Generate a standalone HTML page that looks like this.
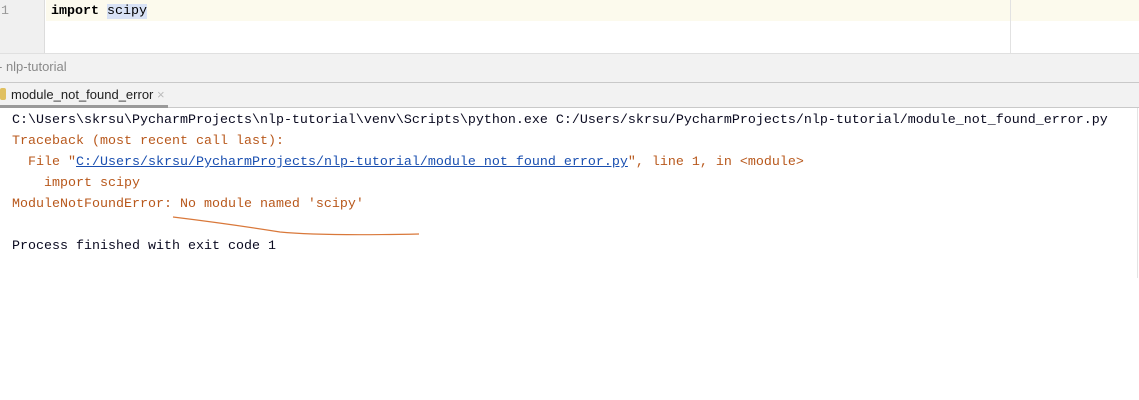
<!DOCTYPE html>
<html><head><meta charset="utf-8"><style>
*{margin:0;padding:0;box-sizing:border-box}
body{width:1139px;height:400px;background:#fff;position:relative;overflow:hidden;font-family:"Liberation Mono",monospace;font-size:13.33px}
.abs{position:absolute;white-space:pre}
.mono{font-family:"Liberation Mono",monospace;font-size:13.33px;line-height:21px}
</style></head><body>
<div class="abs" style="left:0;top:0;width:45px;height:53px;background:#f0f0f0;border-right:1px solid #dcdcdc"></div>
<div class="abs" style="left:46px;top:0;width:1093px;height:21px;background:#fcfaed"></div>
<div class="abs" style="left:1010px;top:0;width:1px;height:53px;background:#e2e2e2"></div>
<div class="abs mono" style="left:1px;top:1px;color:#999">1</div>
<div class="abs mono" style="left:51px;top:1px;color:#000"><b style="color:#000">import</b> <span style="background:#d8e2f5;color:#000">scipy</span></div>
<div class="abs" style="left:0;top:53px;width:1139px;height:30px;background:#f2f2f2;border-top:1px solid #e0e0e0;border-bottom:1px solid #c9c9c9"></div>
<div class="abs" style="left:-2px;top:59px;font-family:'Liberation Sans',sans-serif;font-size:13px;color:#8a8a8a">- nlp-tutorial</div>
<div class="abs" style="left:0;top:83px;width:1139px;height:25px;background:#f2f2f2;border-bottom:1px solid #c9c9c9"></div>
<div class="abs" style="left:0;top:88px;width:6px;height:12px;background:#e0c060;border-radius:2px"></div>
<div class="abs" style="left:11px;top:87px;font-family:'Liberation Sans',sans-serif;font-size:13px;color:#222">module_not_found_error <span style="color:#bbb">×</span></div>
<div class="abs" style="left:0;top:105px;width:168px;height:3px;background:#9a9a9a"></div>
<div class="abs" style="left:1137px;top:108px;width:1px;height:170px;background:#e4e4e4"></div>
<div class="abs mono" style="left:12px;top:110px;color:#0a0a20">C:\Users\skrsu\PycharmProjects\nlp-tutorial\venv\Scripts\python.exe C:/Users/skrsu/PycharmProjects/nlp-tutorial/module_not_found_error.py</div>
<div class="abs mono" style="left:12px;top:131px;color:#b8581c">Traceback (most recent call last):</div>
<div class="abs mono" style="left:12px;top:152px;color:#b8581c">  File "<u style="color:#1a4fb0">C:/Users/skrsu/PycharmProjects/nlp-tutorial/module_not_found_error.py</u>", line 1, in &lt;module&gt;</div>
<div class="abs mono" style="left:12px;top:173px;color:#b8581c">    import scipy</div>
<div class="abs mono" style="left:12px;top:194px;color:#b8581c">ModuleNotFoundError: No module named 'scipy'</div>
<svg class="abs" style="left:170px;top:212px" width="260" height="30"><path d="M3 5 Q60 12 110 20 Q150 24 249 22" stroke="#d9783a" stroke-width="1.2" fill="none"/></svg>
<div class="abs mono" style="left:12px;top:236px;color:#0a0a20">Process finished with exit code 1</div>
</body></html>
